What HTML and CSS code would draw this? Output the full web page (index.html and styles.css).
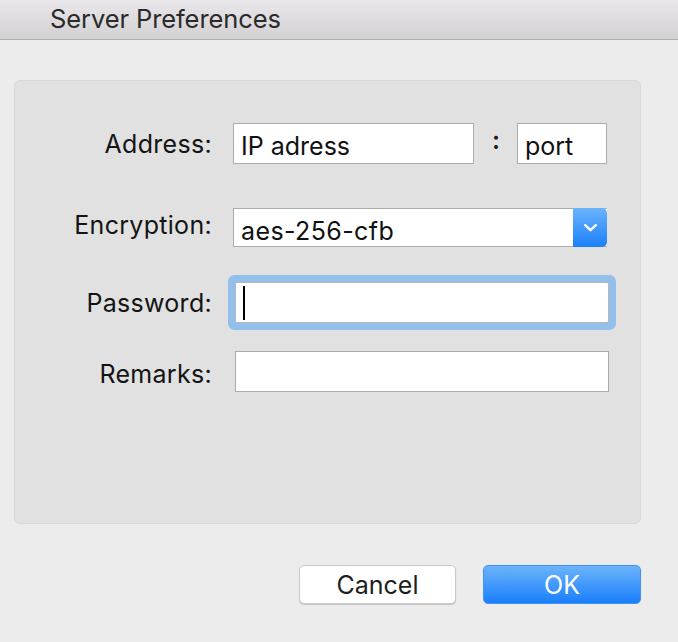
FILE: index.html
```html
<!DOCTYPE html>
<html lang="en">
<head>
<meta charset="utf-8">
<title>Server Preferences</title>
<link rel="stylesheet" href="styles.css">
</head>
<body>
<div class="window">
  <header class="titlebar"><span class="title">Server Preferences</span></header>
  <main class="content">
    <section class="panel">
      <div class="row row-address">
        <label class="label">Address:</label>
        <div class="field field-ip">IP adress</div>
        <span class="colon">:</span>
        <div class="field field-port">port</div>
      </div>
      <div class="row row-enc">
        <label class="label label-enc">Encryption:</label>
        <div class="select">
          <span class="select-value">aes-256-cfb</span>
          <span class="select-btn">
            <svg width="13" height="8" viewBox="0 0 13 8"><polyline points="1.2,1.2 6.5,6.2 11.8,1.2" fill="none" stroke="#fff" stroke-width="2.4" stroke-linecap="round" stroke-linejoin="round"/></svg>
          </span>
        </div>
      </div>
      <div class="row row-pass">
        <label class="label">Password:</label>
        <div class="field field-wide focused"><span class="caret"></span></div>
      </div>
      <div class="row row-remarks">
        <label class="label label-remarks">Remarks:</label>
        <div class="field field-wide"></div>
      </div>
    </section>
    <div class="buttons">
      <button class="btn btn-cancel">Cancel</button>
      <button class="btn btn-ok">OK</button>
    </div>
  </main>
</div>
</body>
</html>
```

FILE: styles.css
```css
* { box-sizing: border-box; }
html, body { margin: 0; padding: 0; }
body {
  background: #ececec;
  font-family: Inter, "Noto Sans", "Liberation Sans", sans-serif;
  color: #1c1c1c;
  width: 678px;
  height: 642px;
  overflow: hidden;
}
.titlebar {
  height: 40px;
  background: linear-gradient(#e9e7e9, #d3d1d3);
  border-bottom: 1px solid #acacac;
  display: flex;
  align-items: center;
  padding-left: 50px;
}
.title {
  font-size: 25.5px;
  color: #2a2a2a;
  letter-spacing: -0.1px;
  padding-bottom: 2px;
}
.content {
  padding: 40px 37px 0 14px;
}
.panel {
  height: 444px;
  background: #e1e1e1;
  border: 1px solid #d9d9d9;
  border-radius: 6px;
  padding-top: 42px;
}
.row {
  display: flex;
  align-items: center;
}
.label {
  width: 197px;
  text-align: right;
  font-size: 25px;
  color: #141414;
  margin-right: 21px;
  letter-spacing: 0.3px;
}
.label-enc { padding-bottom: 6px; }
.label-remarks { padding-top: 4px; }
.field {
  height: 41px;
  background: #fff;
  border: 1px solid #acacac;
  font-size: 25px;
  color: #111;
  padding: 4px 0 0 7px;
  display: flex;
  align-items: center;
}
.field-ip { width: 241px; }
.colon {
  width: 43px;
  text-align: center;
  font-size: 25px;
  font-weight: 600;
  padding-bottom: 8px;
  padding-left: 1px;
}
.field-port { width: 90px; padding-left: 7px; }
.row-enc { margin-top: 44px; }
.select {
  width: 374px;
  height: 39px;
  display: flex;
  background: #fff;
  border: 1px solid #acacac;
  border-right: none;
}
.select-value {
  flex: 1;
  font-size: 25px;
  color: #111;
  padding: 7px 0 0 7px;
  letter-spacing: 0.4px;
}
.select-btn {
  width: 34px;
  margin: -1px 0;
  border-radius: 0 5px 5px 0;
  background: linear-gradient(#6cb4fb, #1a7ffb);
  display: flex;
  align-items: center;
  justify-content: center;
}
.row-pass { margin-top: 35px; }
.row-remarks { margin-top: 28px; }
.field-wide { width: 374px; margin-left: 2px; }
.focused {
  border-radius: 2px;
  box-shadow: 0 0 0 7px #93bfec;
  border-color: #b8b8b8;
}
.caret {
  display: block;
  width: 2px;
  height: 34px;
  background: #000;
  margin-top: -4px;
}
.buttons {
  display: flex;
  justify-content: flex-end;
  gap: 27px;
  margin-top: 41px;
}
.btn {
  height: 39px;
  border-radius: 5px;
  font-family: Inter, "Noto Sans", "Liberation Sans", sans-serif;
  font-size: 25px;
  padding: 0;
  cursor: default;
}
.btn-cancel {
  width: 157px;
  background: #fff;
  border: 1px solid #c9c9c9;
  box-shadow: 0 1px 1px rgba(0,0,0,0.18);
  color: #1e1e1e;
}
.btn-ok {
  width: 158px;
  background: linear-gradient(#6cb4fb, #1a7ffb);
  border: 1px solid #3f91f5;
  color: #fff;
}
```
